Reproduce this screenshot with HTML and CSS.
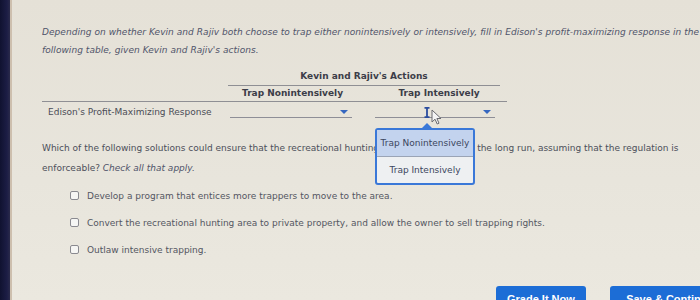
FILE: index.html
```html
<!DOCTYPE html>
<html>
<head>
<meta charset="utf-8">
<link rel="stylesheet" href="styles.css">
</head>
<body>
<div class="page">
  <div class="bezel"></div>
  <main class="content">
    <p class="intro">Depending on whether Kevin and Rajiv both choose to trap either nonintensively or intensively, fill in Edison's profit-maximizing response in the following table, given Kevin and Rajiv's actions.</p>

    <div class="table">
      <div class="group-head">Kevin and Rajiv's Actions</div>
      <div class="col-head blank"></div>
      <div class="col-head first">Trap Nonintensively</div>
      <div class="col-head second">Trap Intensively</div>
      <div class="row-label">Edison's Profit-Maximizing Response</div>
      <div class="cell">
        <div class="select select-a"><span class="arrow"></span></div>
      </div>
      <div class="cell">
        <div class="select select-b">
          <span class="arrow"></span>
          <svg class="ibeam" width="6" height="11" viewBox="0 0 6 11"><path d="M0.5 0.8h5M0.5 10.2h5M3 0.8v9.4" stroke="#2a4c9e" stroke-width="1.8" fill="none"/></svg>
          <svg class="pointer" width="12" height="16" viewBox="0 0 12 16"><path d="M1 1 L1 13 L4 10.2 L6.2 15 L8 14.2 L5.9 9.5 L10 9.5 Z" fill="#f4f4f4" stroke="#6a6a70" stroke-width="1" stroke-linejoin="round"/></svg>
          <div class="menu">
            <div class="menu-item active">Trap Nonintensively</div>
            <div class="menu-item">Trap Intensively</div>
          </div>
        </div>
      </div>
    </div>

    <p class="question">Which of the following solutions could ensure that the recreational hunting area is efficient over the long run, assuming that the regulation is enforceable? <em>Check all that apply.</em></p>

    <ul class="choices">
      <li><span class="box"></span>Develop a program that entices more trappers to move to the area.</li>
      <li><span class="box"></span>Convert the recreational hunting area to private property, and allow the owner to sell trapping rights.</li>
      <li><span class="box"></span>Outlaw intensive trapping.</li>
    </ul>

    <div class="actions">
      <button class="btn">Grade It Now</button>
      <button class="btn">Save &amp; Continue</button>
    </div>
  </main>
</div>
</body>
</html>
```

FILE: styles.css
```css
html, body {
  margin: 0;
  padding: 0;
}
body {
  width: 700px;
  height: 300px;
  overflow: hidden;
  font-family: "DejaVu Sans", Verdana, sans-serif;
  font-size: 9px;
  color: #4c4f5a;
  background: #e7e3d9;
}
.page {
  display: flex;
  height: 300px;
  overflow: hidden;
  background: linear-gradient(180deg, #e5e1d7 0%, #e8e5dc 60%, #ebe8df 100%);
}
.bezel {
  flex: 0 0 10px;
  background: linear-gradient(90deg, #101230 0%, #1c1d45 70%, #2a2a4a 100%);
  border-right: 2px solid #cdbfae;
}
.content {
  flex: 0 0 665px;
  padding-left: 30px;
}
.intro {
  margin: 23px 0 0;
  line-height: 18px;
  font-style: italic;
  letter-spacing: 0.05px;
  color: #50546a;
}
.table {
  margin-top: 9px;
  display: grid;
  grid-template-columns: 186px 143px 136px;
  color: #3c3d48;
}
.group-head {
  grid-column: 2 / 4;
  margin-right: 7px;
  text-align: center;
  font-weight: bold;
  line-height: 17px;
  border-bottom: 1px solid #8f8f94;
}
.col-head {
  font-weight: bold;
  line-height: 15px;
  text-align: center;
  border-bottom: 1px solid #8f8f94;
}
.col-head.first {
  padding-right: 14px;
}
.row-label {
  line-height: 20px;
  padding-left: 6px;
  color: #4a4c56;
}
.cell {
  height: 20px;
}
.select {
  position: relative;
  height: 15px;
  border-bottom: 1px solid #8e8e96;
}
.select-a {
  margin-left: 2px;
  width: 122px;
}
.select-b {
  margin-left: 4px;
  width: 120px;
}
.arrow {
  position: absolute;
  right: 4px;
  top: 8px;
  width: 0;
  height: 0;
  border-left: 4px solid transparent;
  border-right: 4px solid transparent;
  border-top: 4px solid #3567c0;
}
.ibeam {
  position: absolute;
  left: 49px;
  top: 5px;
}
.pointer {
  position: absolute;
  left: 56px;
  top: 7px;
  z-index: 3;
}
.menu {
  position: absolute;
  left: 0;
  top: 26px;
  width: 96px;
  border: 2px solid #3a78d8;
  border-radius: 3px;
  background: #eef0f2;
  z-index: 2;
  color: #3c4660;
}
.menu::before {
  content: "";
  position: absolute;
  left: 45px;
  top: -7px;
  border-left: 5px solid transparent;
  border-right: 5px solid transparent;
  border-bottom: 5px solid #3a78d8;
}
.menu-item {
  height: 26px;
  line-height: 26px;
  text-align: center;
  white-space: nowrap;
}
.menu-item.active {
  background: #c3d3ee;
  border-bottom: 1px solid #9aa4b6;
}
.question {
  margin: 16px 0 0;
  line-height: 20px;
  color: #4c4f5a;
}
.question em {
  color: #50546a;
}
.choices {
  list-style: none;
  margin: 4px 0 0;
  padding: 0 0 0 28px;
  color: #545662;
}
.choices li {
  display: flex;
  align-items: center;
  height: 27px;
}
.box {
  width: 7px;
  height: 7px;
  border: 1px solid #8a8a90;
  border-radius: 2px;
  background: #f6f6f4;
  margin-right: 8px;
  flex: 0 0 auto;
}
.actions {
  margin-top: 23px;
  padding-left: 454px;
  display: flex;
  gap: 24px;
}
.btn {
  font-family: "Liberation Sans", Arial, sans-serif;
  font-weight: bold;
  font-size: 11px;
  color: #ffffff;
  background: #1c6dd6;
  border: none;
  border-radius: 3px;
  height: 26px;
  padding: 0 11px;
  line-height: 26px;
  white-space: nowrap;
}
.btn + .btn {
  padding: 0 11px;
  width: 120px;
}
```
